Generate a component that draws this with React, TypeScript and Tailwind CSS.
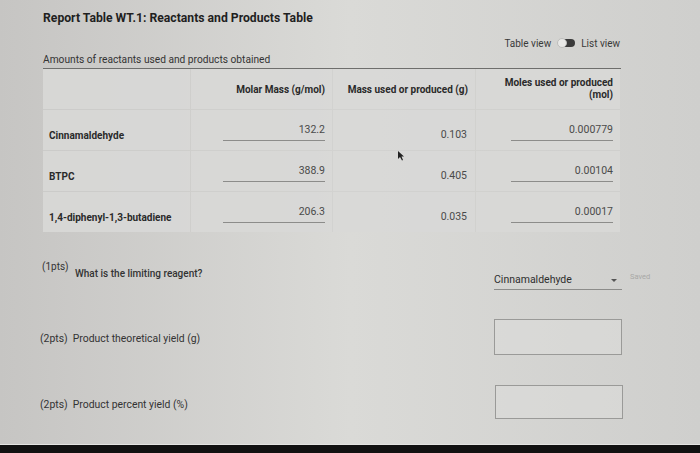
import React from 'react';

const rows = [
  { name: 'Cinnamaldehyde', molar: '132.2', mass: '0.103', moles: '0.000779' },
  { name: 'BTPC', molar: '388.9', mass: '0.405', moles: '0.00104' },
  { name: '1,4-diphenyl-1,3-butadiene', molar: '206.3', mass: '0.035', moles: '0.00017' },
];

const cell = 'bg-[#dcdcda]/70 h-[40px]';

function ValueInput({ value }: { value: string }) {
  return (
    <div className="flex justify-end pr-[7px] pt-[14px]">
      <div className="w-[102px] border-b border-[#8c8c8a] pb-[4px] text-right text-[10.5px] leading-[12px] text-[#4a4a4a]">
        {value}
      </div>
    </div>
  );
}

export default function App() {
  return (
    <div
      className="relative flex h-[453px] w-[700px] flex-col overflow-hidden bg-linear-to-r from-[#c6c5c3] via-[#dadad7] to-[#cfcfcd]"
      style={{ fontFamily: 'Roboto, "Noto Sans", sans-serif' }}
    >
      <div className="flex-1 pl-[43px] pt-[10px]">
        <div className="w-[578px]">
          <h1 className="text-[12.2px] font-bold leading-[16px] text-[#1f1f1f]">
            Report Table WT.1: Reactants and Products Table
          </h1>

          <div className="mt-[11px] flex h-[12px] items-center justify-end gap-[6px] pr-[1px] text-[10px] text-[#3a3a3a]">
            <span>Table view</span>
            <span className="relative block h-[10px] w-[18px]">
              <span className="absolute right-0 top-[1px] h-[8px] w-[13px] rounded-r-full bg-[#3b3b3b]" />
              <span className="absolute left-0 top-0 h-[10px] w-[10px] rounded-full border border-[#bdbdbb] bg-[#e8e8e6]" />
            </span>
            <span>List view</span>
          </div>

          <div className="mt-[5px] border-b border-[#6e6e6c] pb-[2px] text-[10.2px] leading-[12px] text-[#333]">
            Amounts of reactants used and products obtained
          </div>

          <div className="grid w-[577px] grid-cols-[147px_141px_142px_144px] gap-px bg-[#cdcdcb]/60">
            <div className={cell} />
            <div className={`${cell} flex items-center justify-end pr-[7px] text-[10px] font-bold text-[#2a2a2a]`}>
              Molar Mass (g/mol)
            </div>
            <div className={`${cell} flex items-center justify-end pr-[7px] text-[10px] font-bold text-[#2a2a2a]`}>
              Mass used or produced (g)
            </div>
            <div className={`${cell} flex items-center justify-end pr-[7px] text-right text-[10px] font-bold leading-[12px] text-[#2a2a2a]`}>
              <span>
                Moles used or produced
                <br />
                (mol)
              </span>
            </div>

            {rows.map((r) => (
              <React.Fragment key={r.name}>
                <div className={`${cell} pl-[6px] pt-[20px] text-[10px] font-bold leading-[12px] text-[#2a2a2a]`}>
                  {r.name}
                </div>
                <div className={cell}>
                  <ValueInput value={r.molar} />
                </div>
                <div className={`${cell} pr-[8px] pt-[19px] text-right text-[10.5px] leading-[12px] text-[#4a4a4a]`}>
                  {r.mass}
                </div>
                <div className={cell}>
                  <ValueInput value={r.moles} />
                </div>
              </React.Fragment>
            ))}
          </div>

          <div className="mt-[29px] flex h-[36px] items-start">
            <div className="-ml-px flex w-[452px] shrink-0 text-[10px] leading-[12px] text-[#333]">
              <span className="w-[33px]">(1pts)</span>
              <span className="mt-[7px] font-medium">What is the limiting reagent?</span>
            </div>
            <div className="mt-[13px] flex w-[128px] shrink-0 items-center justify-between border-b border-[#8c8c8a] pb-[3px] text-[10.5px] leading-[12px] text-[#2e2e2e]">
              <span>Cinnamaldehyde</span>
              <span className="mr-[5px] h-0 w-0 border-x-[3px] border-t-[3px] border-x-transparent border-t-[#555]" />
            </div>
            <span className="ml-[8px] mt-[10px] shrink-0 text-[7.5px] text-[#a8a8a6]">Saved</span>
          </div>

          <div className="mt-[22px] flex h-[36px] items-center">
            <div className="-ml-[3px] w-[454px] shrink-0 pt-[3px] text-[10.4px] text-[#333]">
              (2pts)&nbsp; Product theoretical yield (g)
            </div>
            <div className="h-[36px] w-[128px] shrink-0 border border-[#9a9a98] bg-[#dededc]/50" />
          </div>

          <div className="mt-[30px] flex h-[34px] items-center">
            <div className="-ml-[3px] w-[455px] shrink-0 pt-[6px] text-[10.4px] text-[#333]">
              (2pts)&nbsp; Product percent yield (%)
            </div>
            <div className="h-[34px] w-[128px] shrink-0 border border-[#9a9a98] bg-[#dededc]/50" />
          </div>
        </div>
      </div>

      <svg className="absolute left-[397px] top-[150px]" width="8" height="11" viewBox="0 0 8 11">
        <path d="M1 1 L1 9 L3 7 L5 10.5 L6 10 L4.5 6.5 L7 6.5 Z" fill="#222" />
      </svg>

      <div className="h-px bg-[#e4e4e2]" />
      <div className="h-[8px] bg-[#111]" />
    </div>
  );
}
